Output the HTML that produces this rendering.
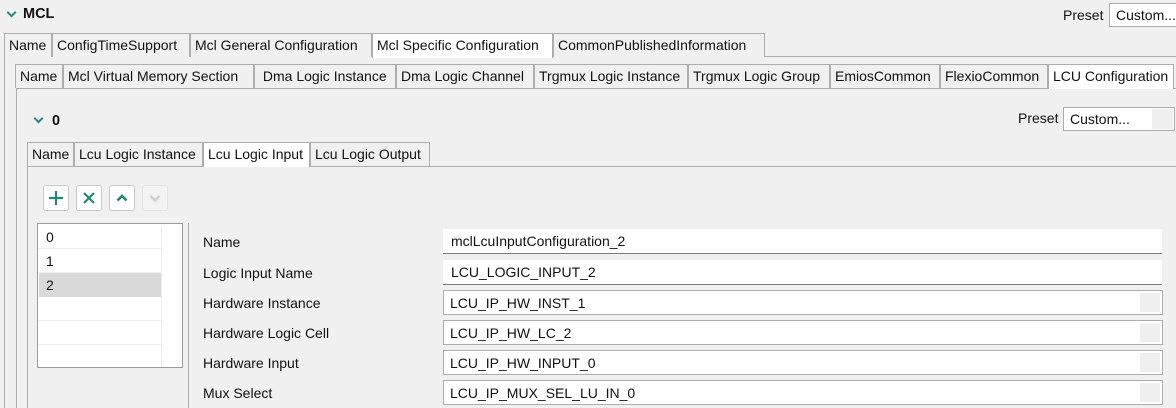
<!DOCTYPE html><html><head><style>
*{box-sizing:border-box;margin:0;padding:0}
body{width:1176px;height:408px;background:#f0f0f0;font-family:"Liberation Sans",sans-serif;font-size:14px;color:#111;position:relative;overflow:hidden}
.a{position:absolute;white-space:nowrap}
.tab{position:absolute;height:24px;line-height:23px;border:1px solid #adadad;border-bottom:none;background:#f0f0f0;padding-left:4px;overflow:hidden;white-space:nowrap;margin-left:-1px}
.sel{background:#fff;height:25px}
.hl{position:absolute;height:1px;background:#adadad}
.vl{position:absolute;width:1px;background:#adadad}
.chev{position:absolute;width:7px;height:7px;border-right:2px solid #2a8a78;border-bottom:2px solid #2a8a78;transform:rotate(45deg)}
.box{position:absolute;background:#fff;border:1px solid #adadad;height:24px;line-height:22px;padding-left:6px}
.btn{position:absolute;top:185px;width:26px;height:26px;border:1px solid #c8c8c8;border-radius:3px;background:#fff}
.lbl{position:absolute;left:203px}
.f1{position:absolute;left:443px;width:719px;height:25px;background:#fff;border-bottom:1px solid #7a7a7a;line-height:25px;padding-left:8px}
.f2{position:absolute;left:443px;width:720px;height:25px;background:#fff;border:1px solid #adadad;line-height:24px;padding-left:6px}
.f2:after{content:"";position:absolute;right:2px;top:2px;width:20px;height:19px;background:#efefef}
</style></head><body>
<div class="chev" style="left:8px;top:9px"></div>
<div class="a" style="left:23px;top:6px;font-weight:bold;font-size:14.5px">MCL</div>
<div class="a" style="left:1063px;top:7px">Preset</div>
<div class="box" style="left:1109px;top:3px;width:70px">Custom...</div>

<div class="hl" style="left:4px;top:56px;width:1172px"></div>
<div class="vl" style="left:4px;top:56px;height:352px"></div>
<div class="tab" style="left:5px;top:33px;width:48px">Name</div>
<div class="tab" style="left:53px;top:33px;width:138px">ConfigTimeSupport</div>
<div class="tab" style="left:191px;top:33px;width:182px">Mcl General Configuration</div>
<div class="tab sel" style="left:373px;top:33px;width:181px">Mcl Specific Configuration</div>
<div class="tab" style="left:554px;top:33px;width:212px">CommonPublishedInformation</div>

<div class="hl" style="left:16px;top:88px;width:1160px"></div>
<div class="vl" style="left:16px;top:88px;height:320px"></div>
<div class="tab" style="left:16px;top:64px;width:48px">Name</div>
<div class="tab" style="left:64px;top:64px;width:191px">Mcl Virtual Memory Section</div>
<div class="tab" style="left:255px;top:64px;width:142px">&nbsp;Dma Logic Instance</div>
<div class="tab" style="left:397px;top:64px;width:138px">Dma Logic Channel</div>
<div class="tab" style="left:535px;top:64px;width:154px">Trgmux Logic Instance</div>
<div class="tab" style="left:689px;top:64px;width:142px">Trgmux Logic Group</div>
<div class="tab" style="left:831px;top:64px;width:110px">EmiosCommon</div>
<div class="tab" style="left:941px;top:64px;width:108px">FlexioCommon</div>
<div class="tab sel" style="left:1049px;top:64px;width:126px">LCU Configuration</div>

<div class="chev" style="left:35px;top:115px"></div>
<div class="a" style="left:52px;top:113px;font-weight:bold;font-size:14.5px">0</div>
<div class="a" style="left:1018px;top:110px">Preset</div>
<div class="box" style="left:1063px;top:107px;width:112px;height:24px">Custom...<span style="position:absolute;right:1px;top:1px;width:21px;height:20px;background:#efefef"></span></div>

<div class="hl" style="left:27px;top:166px;width:1149px"></div>
<div class="vl" style="left:27px;top:166px;height:242px"></div>
<div class="tab" style="left:28px;top:142px;width:47px">Name</div>
<div class="tab" style="left:75px;top:142px;width:129px">Lcu Logic Instance</div>
<div class="tab sel" style="left:204px;top:142px;width:107px">Lcu Logic Input</div>
<div class="tab" style="left:311px;top:142px;width:120px">Lcu Logic Output</div>

<div class="btn" style="left:43px"><svg width="24" height="24"><path d="M12 5v14M5 12h14" stroke="#1f8a70" stroke-width="2.2"/></svg></div>
<div class="btn" style="left:76px"><svg width="24" height="24"><path d="M7 7l10 10M17 7L7 17" stroke="#1f8a70" stroke-width="2.2"/></svg></div>
<div class="btn" style="left:109px"><svg width="24" height="24"><path d="M7.5 14.5L12 10l4.5 4.5" stroke="#1f8a70" stroke-width="2.6" fill="none"/></svg></div>
<div class="btn" style="left:142px;background:#f3f3f3;border-color:#e3e3e3"><svg width="24" height="24"><path d="M7.5 10L12 14.5 16.5 10" stroke="#cfcfcf" stroke-width="2.6" fill="none"/></svg></div>

<div class="a" style="left:37px;top:223px;width:146px;height:145px;background:#fff;border:1px solid #9a9a9a">
<div class="a" style="left:123px;top:2px;width:1px;height:140px;background:#e8edf3"></div>
<div class="a" style="left:1px;top:1px;width:122px;height:24px;border-bottom:1px solid #eee;padding-left:7px;line-height:25px">0</div>
<div class="a" style="left:1px;top:25px;width:122px;height:24px;border-bottom:1px solid #eee;padding-left:7px;line-height:25px">1</div>
<div class="a" style="left:1px;top:49px;width:122px;height:24px;background:#d9d9d9;padding-left:7px;line-height:25px">2</div>
<div class="a" style="left:1px;top:73px;width:122px;height:24px;border-bottom:1px solid #eee"></div>
<div class="a" style="left:1px;top:97px;width:122px;height:24px;border-bottom:1px solid #eee"></div>
</div>
<div class="vl" style="left:188px;top:223px;height:185px"></div>

<div class="lbl" style="top:234px">Name</div>
<div class="lbl" style="top:265px">Logic Input Name</div>
<div class="lbl" style="top:295px">Hardware Instance</div>
<div class="lbl" style="top:325px">Hardware Logic Cell</div>
<div class="lbl" style="top:355px">Hardware Input</div>
<div class="lbl" style="top:385px">Mux Select</div>
<div class="f1" style="top:229px">mclLcuInputConfiguration_2</div>
<div class="f1" style="top:260px">LCU_LOGIC_INPUT_2</div>
<div class="f2" style="top:290px">LCU_IP_HW_INST_1</div>
<div class="f2" style="top:320px">LCU_IP_HW_LC_2</div>
<div class="f2" style="top:350px">LCU_IP_HW_INPUT_0</div>
<div class="f2" style="top:380px">LCU_IP_MUX_SEL_LU_IN_0</div>
</body></html>
